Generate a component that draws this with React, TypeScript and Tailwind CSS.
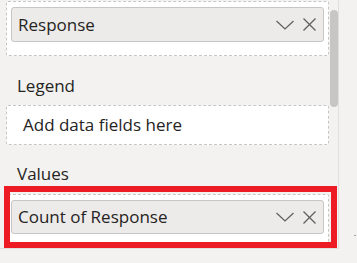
import React from "react";

function Chevron() {
  return (
    <svg width="18" height="10" viewBox="0 0 18 10" fill="none">
      <polyline points="0.5,1 9,9 17.5,1" stroke="#605e5c" strokeWidth="1.2" />
    </svg>
  );
}

function Cross() {
  return (
    <svg width="13" height="13" viewBox="0 0 13 13" fill="none">
      <line x1="0.5" y1="0.5" x2="12.5" y2="12.5" stroke="#605e5c" strokeWidth="1.3" />
      <line x1="12.5" y1="0.5" x2="0.5" y2="12.5" stroke="#605e5c" strokeWidth="1.3" />
    </svg>
  );
}

function Pill({ label, h }: { label: string; h: string }) {
  return (
    <div
      className={`flex items-center justify-between ${h} rounded-[3px] border border-[#c8c6c4] bg-[#edebe9] pl-[6px] pr-[7px]`}
    >
      <span className="text-[17px] leading-[22px] text-[#252423]">{label}</span>
      <div className="flex items-center gap-[9px]">
        <Chevron />
        <Cross />
      </div>
    </div>
  );
}

export default function App() {
  return (
    <div className="relative h-[263px] w-[357px] overflow-hidden bg-[#f3f2f1] font-['Open_Sans',sans-serif]">
      <div className="flex h-[249px] w-[339px] overflow-hidden border-b border-r border-[#e1dfdd]">
        <div className="flex w-[329px] flex-col pl-[6px] pt-[1px]">
          <div className="rounded-[2px] border border-dashed border-[#c8c6c4] bg-white px-[4px] pb-[13px] pt-[5px]">
            <Pill label="Response" h="h-[35px]" />
          </div>
          <div className="mb-[8px] mt-[19px] pl-[11px] text-[17px] leading-[22px] text-[#252423]">Legend</div>
          <div className="flex h-[41px] items-center rounded-[2px] border border-dashed border-[#c8c6c4] bg-white pl-[16px] text-[17px] leading-[22px] text-[#252423]">
            Add data fields here
          </div>
          <div className="mb-[9px] mt-[18px] pl-[11px] text-[17px] leading-[22px] text-[#252423]">Values</div>
          <div className="rounded-[2px] border border-dashed border-[#c8c6c4] bg-white px-[4px] pb-[13px] pt-[5px]">
            <Pill label="Count of Response" h="h-[34px]" />
          </div>
        </div>
        <div className="w-[9px] pl-[1px] pt-[10px]">
          <div className="h-[97px] w-[8px] rounded-full bg-[#c8c6c4]" />
        </div>
      </div>
      <div className="absolute left-[4px] top-[186px] h-[62px] w-[333px] border-[6px] border-[#ed1c24]" />
      <div className="absolute left-[354px] top-[235px] h-[1px] w-[2px] bg-[#a19f9d]" />
    </div>
  );
}
